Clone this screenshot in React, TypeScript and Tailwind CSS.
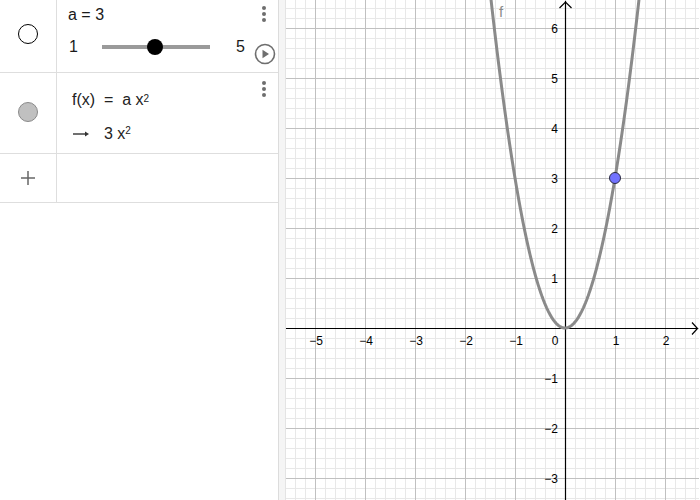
import React from 'react';

const OX = 279; // origin in graph coords (page x 566)
const OY = 328;
const U = 50;
const W = 413;
const H = 500;

const Dots = ({ top }: { top: string }) => (
  <div className={`absolute right-[12px] ${top} flex flex-col gap-[2px]`}>
    <span className="w-[4px] h-[4px] rounded-full bg-[#6e6e6e]" />
    <span className="w-[4px] h-[4px] rounded-full bg-[#6e6e6e]" />
    <span className="w-[4px] h-[4px] rounded-full bg-[#6e6e6e]" />
  </div>
);

const Graph = () => {
  const minorX: number[] = [];
  for (let x = OX % 10; x <= W; x += 10) minorX.push(x);
  const minorY: number[] = [];
  for (let y = OY % 10; y <= H; y += 10) minorY.push(y);
  const majorX: number[] = [];
  for (let x = OX % 50; x <= W; x += 50) majorX.push(x);
  const majorY: number[] = [];
  for (let y = OY % 50; y <= H; y += 50) majorY.push(y);

  const pts: string[] = [];
  for (let i = -160; i <= 160; i++) {
    const t = i / 100;
    pts.push(`${(OX + t * U).toFixed(1)},${(OY - 3 * t * t * U).toFixed(1)}`);
  }

  const xLabels = [-5, -4, -3, -2, -1, 1, 2];
  const yLabels = [6, 5, 4, 3, 2, 1, -1, -2, -3];

  return (
    <svg width={W} height={H} className="block" style={{ fontFamily: '"Liberation Sans", Arial, sans-serif' }}>
      <rect width={W} height={H} fill="#ffffff" />
      {minorX.map(x => <line key={'mx' + x} x1={x + 0.5} y1={0} x2={x + 0.5} y2={H} stroke="#e8e8e8" strokeWidth={1} />)}
      {minorY.map(y => <line key={'my' + y} x1={0} y1={y + 0.5} x2={W} y2={y + 0.5} stroke="#e8e8e8" strokeWidth={1} />)}
      {majorX.map(x => <line key={'Mx' + x} x1={x + 0.5} y1={0} x2={x + 0.5} y2={H} stroke="#c0c0c0" strokeWidth={1} />)}
      {majorY.map(y => <line key={'My' + y} x1={0} y1={y + 0.5} x2={W} y2={y + 0.5} stroke="#c0c0c0" strokeWidth={1} />)}

      {/* axes */}
      <line x1={0} y1={OY + 0.5} x2={W - 1} y2={OY + 0.5} stroke="#000" strokeWidth={1.2} />
      <polyline points={`${W - 7},${OY - 5.5} ${W - 1.5},${OY + 0.5} ${W - 7},${OY + 6.5}`} fill="none" stroke="#000" strokeWidth={1.2} />
      <line x1={OX + 0.5} y1={1} x2={OX + 0.5} y2={H} stroke="#000" strokeWidth={1.2} />
      <polyline points={`${OX - 5.5},${8} ${OX + 0.5},${2} ${OX + 6.5},${8}`} fill="none" stroke="#000" strokeWidth={1.2} />

      {xLabels.map(v => (
        <text key={'xl' + v} x={OX + v * U + 1} y={OY + 17} fontSize={12} textAnchor="middle" fill="#000">
          {v < 0 ? '\u2212' + Math.abs(v) : v}
        </text>
      ))}
      <text x={OX - 10} y={OY + 17} fontSize={12} textAnchor="middle" fill="#000">0</text>
      {yLabels.map(v => (
        <text key={'yl' + v} x={OX - 7} y={OY - v * U + 4.5} fontSize={12} textAnchor="end" fill="#000">
          {v < 0 ? '\u2212' + Math.abs(v) : v}
        </text>
      ))}

      {/* f(x) = 3x^2 */}
      <polyline points={pts.join(' ')} fill="none" stroke="#8a8a8a" strokeWidth={3} strokeLinejoin="round" />
      <text x={213} y={17} fontSize={15} fill="#8a8a8a">f</text>

      {/* point */}
      <circle cx={OX + U} cy={OY - 3 * U} r={5.5} fill="#7272ff" stroke="#2a2a40" strokeWidth={1} />
    </svg>
  );
};

export default function App() {
  return (
    <div
      className="flex w-[700px] h-[500px] bg-white overflow-hidden text-[#1a1a1a]"
      style={{ fontFamily: '"Liberation Sans", Arial, sans-serif' }}
    >
      {/* Algebra view */}
      <div className="w-[279px] h-full flex flex-col bg-white border-r border-[#dcdcdc] shrink-0">
        {/* slider row */}
        <div className="relative flex h-[73px] border-b border-[#dedede]">
          <div className="w-[57px] shrink-0 border-r border-[#dedede] flex justify-center pt-[24px]">
            <div className="w-[20px] h-[20px] rounded-full border border-black bg-white" />
          </div>
          <div className="flex-1 pl-[11px] pt-[5px]">
            <div className="text-[16px] leading-[20px]">a = 3</div>
            <div className="flex items-center mt-[12px] h-[20px]">
              <span className="text-[16px] w-[34px] pl-[1px]">1</span>
              <div className="relative w-[108px] h-[4px] bg-[#9a9a9a]">
                <div className="absolute left-[45px] -top-[6px] w-[16px] h-[16px] rounded-full bg-black" />
              </div>
              <span className="text-[16px] ml-[26px]">5</span>
            </div>
          </div>
          <Dots top="top-[6px]" />
          <svg className="absolute left-[254px] top-[43px]" width="22" height="22" viewBox="0 0 22 22">
            <circle cx="11" cy="11" r="9.5" fill="none" stroke="#6e6e6e" strokeWidth="1.6" />
            <path d="M8.5 6.8 L15 11 L8.5 15.2 Z" fill="#6e6e6e" />
          </svg>
        </div>

        {/* function row */}
        <div className="relative flex h-[81px] border-b border-[#dedede]">
          <div className="w-[57px] shrink-0 border-r border-[#dedede] flex justify-center pt-[29px]">
            <div className="w-[20px] h-[20px] rounded-full border border-[#8a8a8a] bg-[#c0c0c0]" />
          </div>
          <div className="flex-1 pl-[15px] pt-[17px] text-[#222]">
            <div className="text-[16px] leading-[20px] whitespace-nowrap">
              f(x)&nbsp;&nbsp;=&nbsp;&nbsp;a x<sup className="text-[10px] relative -top-[3px]">2</sup>
            </div>
            <div className="flex items-center mt-[14px] text-[16px] leading-[20px] whitespace-nowrap">
              <svg width="18" height="8" viewBox="0 0 18 8" className="mr-[14px]">
                <line x1="1" y1="4" x2="14" y2="4" stroke="#333" strokeWidth="1.4" />
                <path d="M13 1.5 L17 4 L13 6.5 Z" fill="#333" />
              </svg>
              3 x<sup className="text-[10px] relative -top-[3px]">2</sup>
            </div>
          </div>
          <Dots top="top-[8px]" />
        </div>

        {/* input row */}
        <div className="flex h-[49px] border-b border-[#dedede]">
          <div className="w-[57px] shrink-0 border-r border-[#dedede] flex items-center justify-center">
            <svg width="14" height="14" viewBox="0 0 14 14">
              <line x1="7" y1="0" x2="7" y2="14" stroke="#666" strokeWidth="1.5" />
              <line x1="0" y1="7" x2="14" y2="7" stroke="#666" strokeWidth="1.5" />
            </svg>
          </div>
          <div className="flex-1" />
        </div>
      </div>

      {/* splitter */}
      <div className="w-[7px] h-full bg-[#f5f5f5] border-r border-[#e4e4e4] shrink-0" />

      {/* Graphics view */}
      <div className="flex-1 h-full">
        <Graph />
      </div>
    </div>
  );
}
